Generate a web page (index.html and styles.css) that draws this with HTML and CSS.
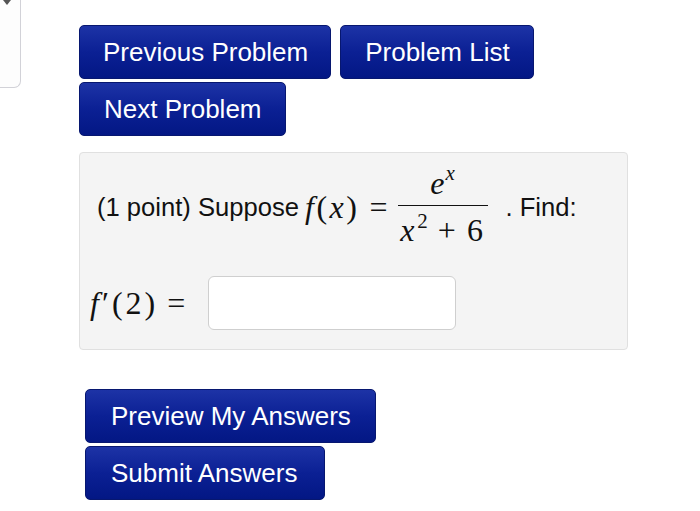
FILE: index.html
```html
<!DOCTYPE html>
<html>
<head>
<meta charset="utf-8">
<link rel="stylesheet" href="styles.css">
</head>
<body>
<div class="page">
  <aside class="side"><span class="tick"></span></aside>
  <main class="main">
    <div class="nav">
      <div class="row">
        <button class="btn btn-prev">Previous Problem</button>
        <button class="btn btn-list">Problem List</button>
      </div>
      <div class="row">
        <button class="btn btn-next">Next Problem</button>
      </div>
    </div>
    <section class="problem">
      <div class="statement">
        <span class="txt">(1 point) Suppose</span>
        <span class="math lhs"><i>f</i>(<i>x</i>)</span>
        <span class="math eq">=</span>
        <span class="frac">
          <span class="num math"><i>e</i><sup><i>x</i></sup></span>
          <span class="den math"><i>x</i><sup>2</sup><span class="op">+</span>6</span>
        </span>
        <span class="txt find">. Find:</span>
      </div>
      <div class="answer">
        <span class="math ans-label"><span class="fp"><i>f</i>&#8242;(2)</span><span class="eq2">=</span></span>
        <input class="ans-input" type="text">
      </div>
    </section>
    <div class="submit">
      <button class="btn btn-preview">Preview My Answers</button>
      <button class="btn btn-submit">Submit Answers</button>
    </div>
  </main>
</div>
</body>
</html>
```
FILE: styles.css
```css
html, body {
  margin: 0;
  padding: 0;
  background: #fff;
}
.page {
  display: flex;
  align-items: flex-start;
  width: 700px;
  height: 511px;
  overflow: hidden;
  font-family: "Liberation Sans", Arial, sans-serif;
}
.side {
  position: relative;
  width: 21px;
  height: 88px;
  box-sizing: border-box;
  border-right: 1px solid #d2d2d8;
  border-bottom: 1px solid #d2d2d8;
  border-bottom-right-radius: 7px;
  background: #fdfdfd;
  flex-shrink: 0;
}
.tick {
  position: absolute;
  left: 3px;
  top: 0;
  width: 0;
  height: 0;
  border-left: 4px solid transparent;
  border-right: 4px solid transparent;
  border-top: 5px solid #555;
}
.main {
  margin-left: 58px;
  padding-top: 25px;
  display: flex;
  flex-direction: column;
  align-items: flex-start;
}
.nav {
  display: flex;
  flex-direction: column;
  gap: 3px;
}
.row {
  display: flex;
  gap: 9px;
}
.btn {
  height: 54px;
  box-sizing: border-box;
  padding: 0 23px 0 24px;
  border: 1px solid #071770;
  border-radius: 5px;
  background: linear-gradient(#1d33a6, #0b2094 50%, #031784);
  color: #fff;
  font-family: "Liberation Sans", Arial, sans-serif;
  font-size: 26px;
  line-height: 1;
  margin: 0;
  cursor: pointer;
}
.btn-prev {
  padding: 0 22px 0 23px;
}
.problem {
  margin-top: 16px;
  width: 549px;
  height: 198px;
  box-sizing: border-box;
  border: 1px solid #e0e0e0;
  border-radius: 4px;
  background: #f4f4f4;
  padding: 16px 0 0 10px;
  display: flex;
  flex-direction: column;
}
.statement {
  display: flex;
  align-items: center;
  color: #111;
}
.txt {
  font-size: 25.6px;
}
.statement > .txt:first-child {
  margin-left: 7px;
}
.math {
  font-family: "Liberation Serif", "Times New Roman", serif;
  font-size: 32px;
  color: #111;
}
.math i {
  font-style: italic;
}
.lhs {
  margin-left: 6px;
  letter-spacing: 2.5px;
}
.eq {
  margin-left: 10px;
  margin-right: 10px;
}
.frac {
  display: inline-flex;
  flex-direction: column;
  width: 90px;
}
.num, .den {
  display: block;
  text-align: center;
  white-space: nowrap;
}
.num {
  height: 36px;
  line-height: 28px;
  border-bottom: 1.5px solid #111;
}
.den {
  height: 40px;
  line-height: 48px;
  padding-right: 2px;
}
.math sup {
  font-size: 21px;
  vertical-align: baseline;
  position: relative;
  top: -13px;
  line-height: 0;
}
.den sup {
  margin-left: 3px;
}
.num sup {
  top: -14px;
  margin-left: 1px;
}
.op {
  margin: 0 11px 0 10px;
}
.find {
  margin-left: 18px;
}
.answer {
  display: flex;
  align-items: center;
  margin-top: 30px;
}
.ans-label {
  width: 118px;
  display: flex;
  align-items: center;
}
.fp {
  letter-spacing: 3px;
}
.eq2 {
  margin-left: 9px;
}
.ans-input {
  width: 248px;
  height: 54px;
  box-sizing: border-box;
  border: 1px solid #cfcfcf;
  border-radius: 6px;
  background: #fff;
  margin: 0;
  padding: 0 8px;
  font-size: 22px;
}
.submit {
  margin-top: 39px;
  margin-left: 6px;
  display: flex;
  flex-direction: column;
  align-items: flex-start;
  gap: 3px;
}
.btn-preview {
  padding: 0 24px 0 25px;
}
.btn-submit {
  padding: 0 27px 0 25px;
}
```
